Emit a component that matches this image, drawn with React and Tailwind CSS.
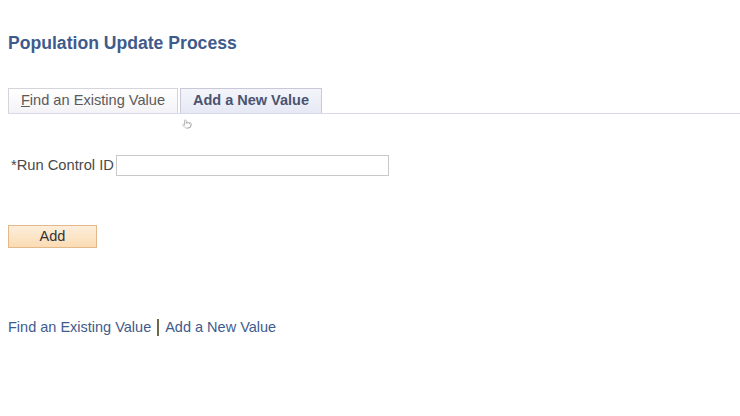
import { Pointer } from 'lucide-react';

export default function App() {
  return (
    <div className="w-[740px] h-[416px] bg-white font-['Liberation_Sans',Arial,sans-serif] overflow-hidden">
      <div className="pt-[33px] pl-2">
        <h1 className="text-[17.6px] font-bold text-[#3f5b8c] leading-[21px]">Population Update Process</h1>
      </div>

      <div className="mt-[35px] ml-2 flex items-end border-b border-[#d9d9ee] h-[25px]">
        <div className="h-[25px] w-[170px] border border-b-0 border-[#d4d4dc] bg-gradient-to-b from-white to-[#f3f3f7] flex items-center justify-center text-[14.6px] text-[#5a5a5a]">
          <span><span className="underline">F</span>ind an Existing Value</span>
        </div>
        <div className="ml-[2px] h-[25px] w-[142px] border border-b-0 border-[#c8c8d8] bg-gradient-to-b from-[#f4f5fb] to-[#e6e9f4] flex items-center justify-center text-[14.5px] font-bold text-[#4a5470]">
          Add a New Value
        </div>
      </div>

      <div className="relative h-[41px]">
        <Pointer className="absolute left-[182px] top-[5px] w-[10px] h-[10px] text-[#9a9a9a]" strokeWidth={1.5} />
      </div>

      <div className="flex items-center pl-[11px] h-[21px]">
        <span className="text-[14.7px] text-[#4a4a4a]">*Run Control ID</span>
        <div className="ml-[2px] w-[273px] h-[21px] border border-[#c9c9c9] bg-white"></div>
      </div>

      <div className="mt-[48px] ml-2">
        <button className="w-[89px] h-[23px] border border-[#e2b98a] bg-gradient-to-b from-[#fdeedb] to-[#fbdcb4] text-[14.5px] text-[#333] leading-none">
          Add
        </button>
      </div>

      <div className="mt-[69px] ml-2 flex items-center text-[14.5px] text-[#3f5b8c]">
        <span>Find an Existing Value</span>
        <span className="mx-[6px] w-[2px] h-[17px] bg-[#6b6b4a]"></span>
        <span>Add a New Value</span>
      </div>
    </div>
  );
}
